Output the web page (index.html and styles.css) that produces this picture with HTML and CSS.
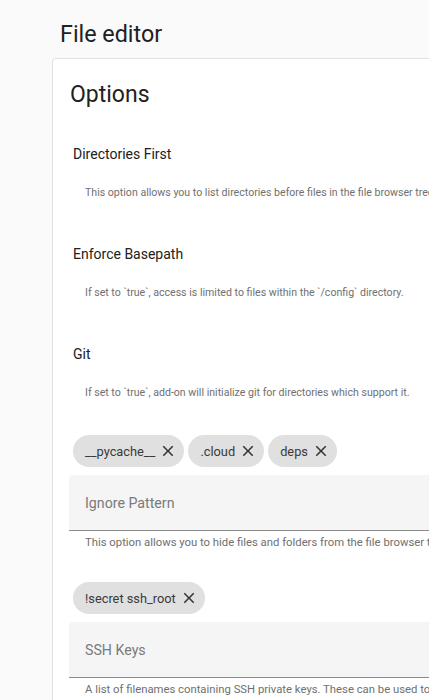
FILE: index.html
```html
<!DOCTYPE html>
<html lang="en">
<head>
<meta charset="utf-8">
<title>File editor</title>
<link rel="stylesheet" href="styles.css">
</head>
<body>
<main class="page">
  <h1 class="page-title">File editor</h1>
  <section class="card">
    <h2 class="card-title">Options</h2>

    <div class="option">
      <div class="option-title">Directories First</div>
      <div class="option-desc">This option allows you to list directories before files in the file browser tree.</div>
    </div>

    <div class="option">
      <div class="option-title">Enforce Basepath</div>
      <div class="option-desc">If set to `true`, access is limited to files within the `/config` directory.</div>
    </div>

    <div class="option">
      <div class="option-title">Git</div>
      <div class="option-desc">If set to `true`, add-on will initialize git for directories which support it.</div>
    </div>

    <div class="list-field">
      <div class="chips">
        <span class="chip">__pycache__<svg class="chip-x" viewBox="0 0 24 24"><path d="M19,6.41L17.59,5L12,10.59L6.41,5L5,6.41L10.59,12L5,17.59L6.41,19L12,13.41L17.59,19L19,17.59L13.41,12L19,6.41Z"/></svg></span>
        <span class="chip">.cloud<svg class="chip-x" viewBox="0 0 24 24"><path d="M19,6.41L17.59,5L12,10.59L6.41,5L5,6.41L10.59,12L5,17.59L6.41,19L12,13.41L17.59,19L19,17.59L13.41,12L19,6.41Z"/></svg></span>
        <span class="chip">deps<svg class="chip-x" viewBox="0 0 24 24"><path d="M19,6.41L17.59,5L12,10.59L6.41,5L5,6.41L10.59,12L5,17.59L6.41,19L12,13.41L17.59,19L19,17.59L13.41,12L19,6.41Z"/></svg></span>
      </div>
      <div class="text-field"><span class="field-label">Ignore Pattern</span></div>
      <div class="helper">This option allows you to hide files and folders from the file browser tree.</div>
    </div>

    <div class="list-field">
      <div class="chips">
        <span class="chip">!secret ssh_root<svg class="chip-x" viewBox="0 0 24 24"><path d="M19,6.41L17.59,5L12,10.59L6.41,5L5,6.41L10.59,12L5,17.59L6.41,19L12,13.41L17.59,19L19,17.59L13.41,12L19,6.41Z"/></svg></span>
      </div>
      <div class="text-field"><span class="field-label">SSH Keys</span></div>
      <div class="helper">A list of filenames containing SSH private keys. These can be used to allow for access to remote git repositories.</div>
    </div>
  </section>
</main>
</body>
</html>
```

FILE: styles.css
```css
html, body {
  margin: 0;
  padding: 0;
  background: #fafafa;
  overflow: hidden;
}

body {
  font-family: Roboto, "Noto Sans", "Liberation Sans", sans-serif;
  color: #212121;
}

.page {
  width: 900px;
  padding: 18px 0 0 52px;
}

.page-title {
  margin: 0 0 8px 8px;
  font-size: 23.3px;
  line-height: 32px;
  font-weight: 400;
  color: #212121;
}

.card {
  width: 800px;
  background: #ffffff;
  border: 1px solid #e0e0e0;
  border-radius: 4px;
  padding: 20px 16px 40px 16px;
}

.card-title {
  margin: 0 0 33px 1px;
  font-size: 23px;
  line-height: 32px;
  font-weight: 400;
  color: #212121;
}

.option {
  padding: 0 4px;
  margin-bottom: 44px;
}

.option-title {
  font-size: 14px;
  line-height: 20px;
  color: #212121;
}

.option-desc {
  margin: 22px 0 0 12px;
  font-size: 10.6px;
  line-height: 14px;
  color: #707070;
  white-space: nowrap;
}

.option:nth-of-type(3) {
  margin-bottom: 35px;
}

.list-field {
  margin-bottom: 31px;
}

.chips {
  display: flex;
  gap: 4px;
  padding-left: 4px;
  margin-bottom: 8px;
}

.chip {
  display: inline-flex;
  align-items: center;
  height: 32px;
  border-radius: 16px;
  background: #e0e0e0;
  padding: 0 7px 0 12px;
  font-size: 12.8px;
  color: #3a3a3a;
  box-sizing: border-box;
}

.chip-x {
  width: 18px;
  height: 18px;
  margin-left: 4px;
  fill: #333333;
}

.text-field {
  display: flex;
  align-items: center;
  height: 55px;
  background: #f5f5f5;
  border-bottom: 1px solid #8c8c8c;
  border-radius: 4px 4px 0 0;
  padding: 0 16px;
}

.field-label {
  font-size: 14.2px;
  color: #7a7a7a;
}

.helper {
  margin: 4px 0 0 16px;
  font-size: 11.3px;
  line-height: 16px;
  color: #6f6f6f;
  white-space: nowrap;
}
```
